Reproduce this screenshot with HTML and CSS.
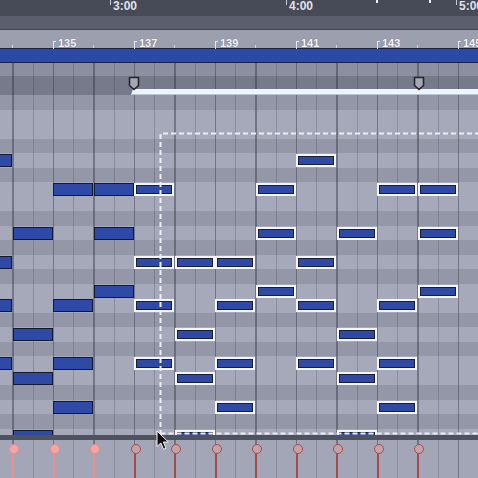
FILE: index.html
```html
<!DOCTYPE html>
<html>
<head>
<meta charset="utf-8">
<title>Piano Roll</title>
<link rel="stylesheet" href="styles.css">
</head>
<body>
<div class="app">
  <div class="timeline">
    <span class="tlabel" style="left:110px">3:00</span>
    <span class="tlabel" style="left:286px">4:00</span>
    <span class="tlabel" style="left:456px">5:00</span>
    <span class="mark" style="left:376px"></span>
    <span class="mark" style="left:429px"></span>
  </div>
  <div class="subbar"></div>
  <div class="ruler">
    <span class="minor" style="left:12px"></span>
    <span class="minor" style="left:93px"></span>
    <span class="minor" style="left:174px"></span>
    <span class="minor" style="left:255px"></span>
    <span class="minor" style="left:336px"></span>
    <span class="minor" style="left:417px"></span>
    <span class="barno" style="left:53px">135</span>
    <span class="barno" style="left:134px">137</span>
    <span class="barno" style="left:215px">139</span>
    <span class="barno" style="left:296px">141</span>
    <span class="barno" style="left:377px">143</span>
    <span class="barno" style="left:458px">145</span>
  </div>
  <div class="clip"></div>
  <div class="lane"></div>
  <div class="looplane">
    <div class="loopbar"></div>
    <svg class="marker" style="left:127.5px" viewBox="0 0 12 15"><path d="M1.5 1.5 H10.5 V9.5 L6 13.5 L1.5 9.5 Z"/></svg>
    <svg class="marker" style="left:412.5px" viewBox="0 0 12 15"><path d="M1.5 1.5 H10.5 V9.5 L6 13.5 L1.5 9.5 Z"/></svg>
  </div>
  <div class="roll">
    <div class="row blk"></div>
    <div class="row"></div>
    <div class="row"></div>
    <div class="row blk"></div>
    <div class="row">
      <span class="note" style="left:-28px"></span>
      <span class="note sel" style="left:296px"></span>
    </div>
    <div class="row blk"></div>
    <div class="row">
      <span class="note" style="left:53px"></span>
      <span class="note" style="left:93.5px"></span>
      <span class="note sel" style="left:134px"></span>
      <span class="note sel" style="left:255.5px"></span>
      <span class="note sel" style="left:377px"></span>
      <span class="note sel" style="left:417.5px"></span>
    </div>
    <div class="row"></div>
    <div class="row blk"></div>
    <div class="row">
      <span class="note" style="left:12.5px"></span>
      <span class="note" style="left:93.5px"></span>
      <span class="note sel" style="left:255.5px"></span>
      <span class="note sel" style="left:336.5px"></span>
      <span class="note sel" style="left:417.5px"></span>
    </div>
    <div class="row blk"></div>
    <div class="row">
      <span class="note" style="left:-28px"></span>
      <span class="note sel" style="left:134px"></span>
      <span class="note sel" style="left:174.5px"></span>
      <span class="note sel" style="left:215px"></span>
      <span class="note sel" style="left:296px"></span>
    </div>
    <div class="row blk"></div>
    <div class="row">
      <span class="note" style="left:93.5px"></span>
      <span class="note sel" style="left:255.5px"></span>
      <span class="note sel" style="left:417.5px"></span>
    </div>
    <div class="row">
      <span class="note" style="left:-28px"></span>
      <span class="note" style="left:53px"></span>
      <span class="note sel" style="left:134px"></span>
      <span class="note sel" style="left:215px"></span>
      <span class="note sel" style="left:296px"></span>
      <span class="note sel" style="left:377px"></span>
    </div>
    <div class="row blk"></div>
    <div class="row">
      <span class="note" style="left:12.5px"></span>
      <span class="note sel" style="left:174.5px"></span>
      <span class="note sel" style="left:336.5px"></span>
    </div>
    <div class="row blk"></div>
    <div class="row">
      <span class="note" style="left:-28px"></span>
      <span class="note" style="left:53px"></span>
      <span class="note sel" style="left:134px"></span>
      <span class="note sel" style="left:215px"></span>
      <span class="note sel" style="left:296px"></span>
      <span class="note sel" style="left:377px"></span>
    </div>
    <div class="row">
      <span class="note" style="left:12.5px"></span>
      <span class="note sel" style="left:174.5px"></span>
      <span class="note sel" style="left:336.5px"></span>
    </div>
    <div class="row blk"></div>
    <div class="row">
      <span class="note" style="left:53px"></span>
      <span class="note sel" style="left:215px"></span>
      <span class="note sel" style="left:377px"></span>
    </div>
    <div class="row blk"></div>
    <div class="row">
      <span class="note" style="left:12.5px"></span>
      <span class="note sel" style="left:174.5px"></span>
      <span class="note sel" style="left:336.5px"></span>
    </div>
    <svg class="selection" viewBox="0 0 478 340">
      <path d="M160.5 340 V38.5 H478"/>
      <path d="M160.5 338.5 H478"/>
    </svg>
  </div>
  <div class="divider"></div>
  <div class="velocity">
    <span class="vel" style="left:12.5px"></span>
    <span class="vel" style="left:53px"></span>
    <span class="vel" style="left:93.5px"></span>
    <span class="vel sel" style="left:134px"></span>
    <span class="vel sel" style="left:174.5px"></span>
    <span class="vel sel" style="left:215px"></span>
    <span class="vel sel" style="left:255.5px"></span>
    <span class="vel sel" style="left:296px"></span>
    <span class="vel sel" style="left:336.5px"></span>
    <span class="vel sel" style="left:377px"></span>
    <span class="vel sel" style="left:417.5px"></span>
  </div>
  <svg class="cursor" viewBox="0 0 14 21"><path d="M1 1 V16.5 L4.8 13 L7.6 19.3 L10 18.2 L7.3 12 H12.3 Z"/></svg>
</div>
</body>
</html>
```

FILE: styles.css
```css
* { box-sizing: border-box; }

:root {
  --vlines: repeating-linear-gradient(90deg,
    rgba(40, 42, 58, 0.4) -28px, rgba(40, 42, 58, 0.4) -26.8px,
    transparent -26.8px, transparent -7.75px,
    rgba(40, 42, 58, 0.22) -7.75px, rgba(40, 42, 58, 0.22) -6.75px,
    transparent -6.75px, transparent 12.5px);
}

html, body {
  margin: 0;
  padding: 0;
}

body {
  width: 478px;
  height: 478px;
  overflow: hidden;
  background: #474a57;
  font-family: "Liberation Sans", Arial, sans-serif;
}

.app {
  position: relative;
  width: 478px;
  height: 478px;
  overflow: hidden;
  display: flex;
  flex-direction: column;
}

.app > * { flex: none; }

.timeline {
  height: 16px;
  position: relative;
  background: #474a57;
}

.tlabel {
  position: absolute;
  top: 0;
  padding-left: 3px;
  font-size: 12px;
  font-weight: bold;
  line-height: 13px;
  color: #e0e1e8;
  white-space: nowrap;
}

.tlabel::before {
  content: "";
  position: absolute;
  left: 0;
  top: 0;
  width: 1px;
  height: 5px;
  background: #c9cad3;
}

.mark {
  position: absolute;
  top: 0;
  width: 2px;
  height: 3px;
  background: #f2f2f6;
}

.subbar {
  height: 14px;
  background: #5b5e6c;
  border-bottom: 1px solid #42444f;
}

.ruler {
  height: 18px;
  position: relative;
  background: #9c9fad;
}

.barno {
  position: absolute;
  top: 8px;
  padding-left: 5px;
  font-size: 11px;
  font-weight: bold;
  line-height: 11px;
  color: #f6f6fa;
  text-shadow: 0 0 1px rgba(60, 62, 80, 0.7);
  white-space: nowrap;
}

.barno::before {
  content: "";
  position: absolute;
  left: 0;
  top: 3px;
  width: 2px;
  height: 7px;
  border-left: 1px solid #e6e7ee;
  border-top: 1px solid #e6e7ee;
}

.minor {
  position: absolute;
  bottom: 0;
  width: 1px;
  height: 3px;
  background: #d2d4dd;
}

.clip {
  height: 15px;
  background: #2c49a8;
  border-top: 1px solid #1b2140;
  border-bottom: 1px solid #1b2140;
}

.lane {
  height: 13px;
  background: var(--vlines), #8c8f9f;
}

.looplane {
  height: 19px;
  position: relative;
  background: var(--vlines), #777a8a;
}

.loopbar {
  position: absolute;
  left: 131px;
  right: 0;
  top: 13px;
  height: 6px;
  background: #f0f3f7;
  border-bottom: 1.5px solid #b8c7d6;
  clip-path: polygon(2px 0, 100% 0, 100% 100%, 0 100%);
}

.marker {
  position: absolute;
  top: 0;
  width: 12px;
  height: 15px;
}

.marker path {
  fill: #a6a7b0;
  stroke: #24252d;
  stroke-width: 1.6;
  stroke-linejoin: round;
}

.roll {
  height: 340px;
  position: relative;
  overflow: hidden;
}

.row {
  height: 14.5px;
  position: relative;
  background: var(--vlines), #a6a9b9;
}

.row.blk {
  background: var(--vlines), #9497a7;
}

.note {
  position: absolute;
  top: 1px;
  width: 40px;
  height: 13px;
  background: #2e4aa6;
  border: 1px solid #161a2e;
}

.note.sel {
  border: 2px solid #f3f5f9;
  box-shadow: inset 0 0 0 1px #1a1e33;
}

.selection {
  position: absolute;
  left: 0;
  top: 0;
  width: 478px;
  height: 340px;
  z-index: 2;
}

.selection path {
  fill: none;
  stroke: #eceef3;
  stroke-width: 2;
  stroke-dasharray: 5 3;
}

.divider {
  height: 5px;
  background: #4f525f;
}

.velocity {
  height: 38px;
  position: relative;
  background: var(--vlines), #a3a6b6;
}

.vel {
  position: absolute;
  top: 4px;
  bottom: 0;
  width: 8px;
  margin-left: -3.5px;
}

.vel::before {
  content: "";
  position: absolute;
  left: 0;
  top: 0;
  width: 8px;
  height: 8px;
  border-radius: 50%;
  border: 1.5px solid #ef8a88;
  background: #f3a7a4;
  z-index: 1;
}

.vel::after {
  content: "";
  position: absolute;
  left: 3px;
  top: 7px;
  bottom: 0;
  width: 2px;
  background: #f08e8c;
}

.vel.sel::before {
  border-color: #a84b4b;
  background: #c3a3a8;
}

.vel.sel::after {
  background: #a64a4a;
}

.cursor {
  position: absolute;
  left: 156px;
  top: 430px;
  width: 14px;
  height: 21px;
  z-index: 5;
}

.cursor path {
  fill: #111;
  stroke: #f4f4f4;
  stroke-width: 1;
  stroke-linejoin: round;
}
```
